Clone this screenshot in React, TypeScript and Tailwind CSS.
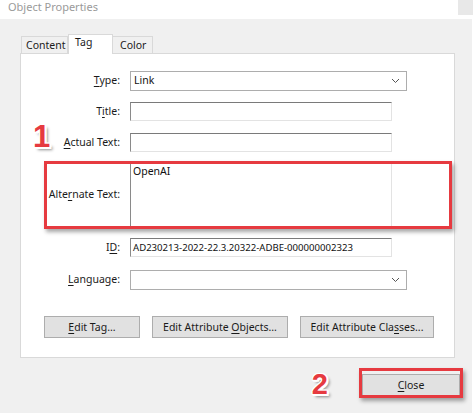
import React from "react";

const font = { fontFamily: '"Noto Sans", "Open Sans", sans-serif' };

// label with one underlined mnemonic letter
const Mn = ({ pre, u, post }: { pre?: string; u: string; post?: string }) => (
  <>
    {pre}
    <span className="underline underline-offset-2">{u}</span>
    {post}
  </>
);

const Chevron = () => (
  <svg width="9" height="6" viewBox="0 0 9 6" className="mr-[6px]">
    <path d="M1 1l3.5 3.5L8 1" fill="none" stroke="#555" strokeWidth="1" />
  </svg>
);

const Row = ({ label, children, h = "h-[20px]" }: { label: React.ReactNode; children: React.ReactNode; h?: string }) => (
  <div className={`flex items-center ${h}`}>
    <div className="w-[99px] shrink-0 text-right text-[10.5px] text-[#1a1a1a]">{label}</div>
    <div className="ml-[10px]">{children}</div>
  </div>
);

const TextBox = ({ value, h = "h-[19px]" }: { value?: string; h?: string }) => (
  <div
    className={`w-[262px] ${h} bg-white border border-t-[#7a7a7a] border-l-[#8a8a8a] border-r-[#e3e3e3] border-b-[#e3e3e3] px-[2px] text-[9.6px] leading-[17px] text-[#111] overflow-hidden whitespace-nowrap`}
  >
    {value}
  </div>
);

const Select = ({ value }: { value?: string }) => (
  <div className="w-[277px] h-[20px] bg-white border border-[#adadad] flex items-center justify-between pl-[3px] text-[10.5px] text-[#111]">
    <span>{value}</span>
    <Chevron />
  </div>
);

const Btn = ({ children, w }: { children: React.ReactNode; w: string }) => (
  <button className={`${w} h-[22px] bg-[#e1e1e1] border border-[#adadad] text-[10.5px] text-[#1a1a1a] leading-none`}>
    {children}
  </button>
);

const Badge = ({ n, cls }: { n: string; cls: string }) => (
  <span
    className={`absolute font-bold text-[#e63a40] leading-none ${cls}`}
    style={{
      fontFamily: '"Liberation Sans", "Arial", sans-serif',
      textShadow:
        "1px 0 0 #fff, -1px 0 0 #fff, 0 1px 0 #fff, 0 -1px 0 #fff, 1px 1px 0 #fff, -1px -1px 0 #fff, 1px -1px 0 #fff, -1px 1px 0 #fff, 2px 0 0 #fff, 0 2px 0 #fff, 2px 2px 0 #fff, 3px 3px 3px rgba(0,0,0,0.45)",
    }}
  >
    {n}
  </span>
);

export default function App() {
  return (
    <div className="w-[474px] h-[413px] bg-white overflow-hidden relative" style={font}>
      {/* title bar */}
      <div className="h-[19px] flex items-start justify-between">
        <span className="text-[11px] text-[#9a9a9a] pl-[8px] leading-[14px]">Object Properties</span>
        <div className="w-[15px] h-[15px] bg-[#e8e8e8] mr-[1px]" />
      </div>

      <div className="w-[472px] h-[394px] bg-[#f0f0f0] pt-[15px] relative">
        {/* tabs */}
        <div className="flex items-end ml-[21px] h-[19px] relative z-10">
          <div className="h-[17px] w-[47px] pl-[4px] border border-[#d9d9d9] border-b-0 bg-[#f0f0f0] text-[10.5px] leading-[16px] text-[#1a1a1a]">Content</div>
          <div className="h-[20px] w-[45px] pl-[6px] border border-[#d9d9d9] border-b-0 bg-white text-[10.5px] leading-[14px] text-[#1a1a1a] -mb-[1px]">Tag</div>
          <div className="h-[17px] w-[40px] pl-[7px] border border-[#d9d9d9] border-b-0 border-l-0 bg-[#f0f0f0] text-[10.5px] leading-[16px] text-[#1a1a1a]">Color</div>
        </div>

        {/* tab panel */}
        <div className="ml-[20px] w-[435px] h-[305px] bg-white border border-[#d9d9d9] pt-[17px] relative">
          <div className="flex flex-col gap-[11px]">
            <Row label={<Mn u="T" post="ype:" />}>
              <Select value="Link" />
            </Row>
            <Row label={<Mn pre="T" u="i" post="tle:" />} h="h-[19px]">
              <TextBox />
            </Row>
            <div className="mt-[1px]">
              <Row label={<Mn u="A" post="ctual Text:" />} h="h-[19px]">
                <TextBox />
              </Row>
            </div>
            <div className="relative">
              <Row label={<Mn pre="Alte" u="r" post="nate Text:" />} h="h-[64px]">
                <div className="w-[262px] h-[64px] bg-white border border-t-[#7a7a7a] border-l-[#8a8a8a] border-r-[#e3e3e3] border-b-[#e3e3e3] px-[2px] text-[10.5px] leading-[15px] text-[#111]">
                  OpenAI
                </div>
              </Row>
              <div className="absolute left-[23px] -top-[2px] w-[408px] h-[68px] border-[3px] border-[#e63a40] shadow-[2px_3px_4px_rgba(0,0,0,0.35)] pointer-events-none" />
            </div>
            <Row label={<Mn pre="I" u="D" post=":" />} h="h-[19px]">
              <TextBox value="AD230213-2022-22.3.20322-ADBE-000000002323" />
            </Row>
            <div className="mt-[2px]">
              <Row label={<Mn u="L" post="anguage:" />}>
                <Select />
              </Row>
            </div>
          </div>

          <div className="flex ml-[23px] mt-[26px] gap-[12px]">
            <Btn w="w-[96px]">
              <Mn u="E" post="dit Tag..." />
            </Btn>
            <Btn w="w-[136px]">
              <Mn pre="Edit Attribute " u="O" post="bjects..." />
            </Btn>
            <Btn w="w-[134px]">
              <Mn pre="Edit Attribute Cla" u="s" post="ses..." />
            </Btn>
          </div>

          <Badge n="1" cls="left-[12px] top-[67px] text-[31px]" />
        </div>

        {/* footer */}
        <div className="flex justify-end items-center mt-[13px] pr-[12px] relative">
          <div className="relative">
            <button className="w-[98px] h-[24px] bg-[#e1e1e1] border border-[#adadad] text-[10.5px] text-[#1a1a1a]">
              <Mn u="C" post="lose" />
            </button>
            <div className="absolute -left-[3px] -top-[3px] w-[104px] h-[30px] border-[3px] border-[#e63a40] shadow-[2px_3px_4px_rgba(0,0,0,0.35)] pointer-events-none" />
          </div>
          <Badge n="2" cls="right-[144px] -top-[1px] text-[29px]" />
        </div>
      </div>
    </div>
  );
}
